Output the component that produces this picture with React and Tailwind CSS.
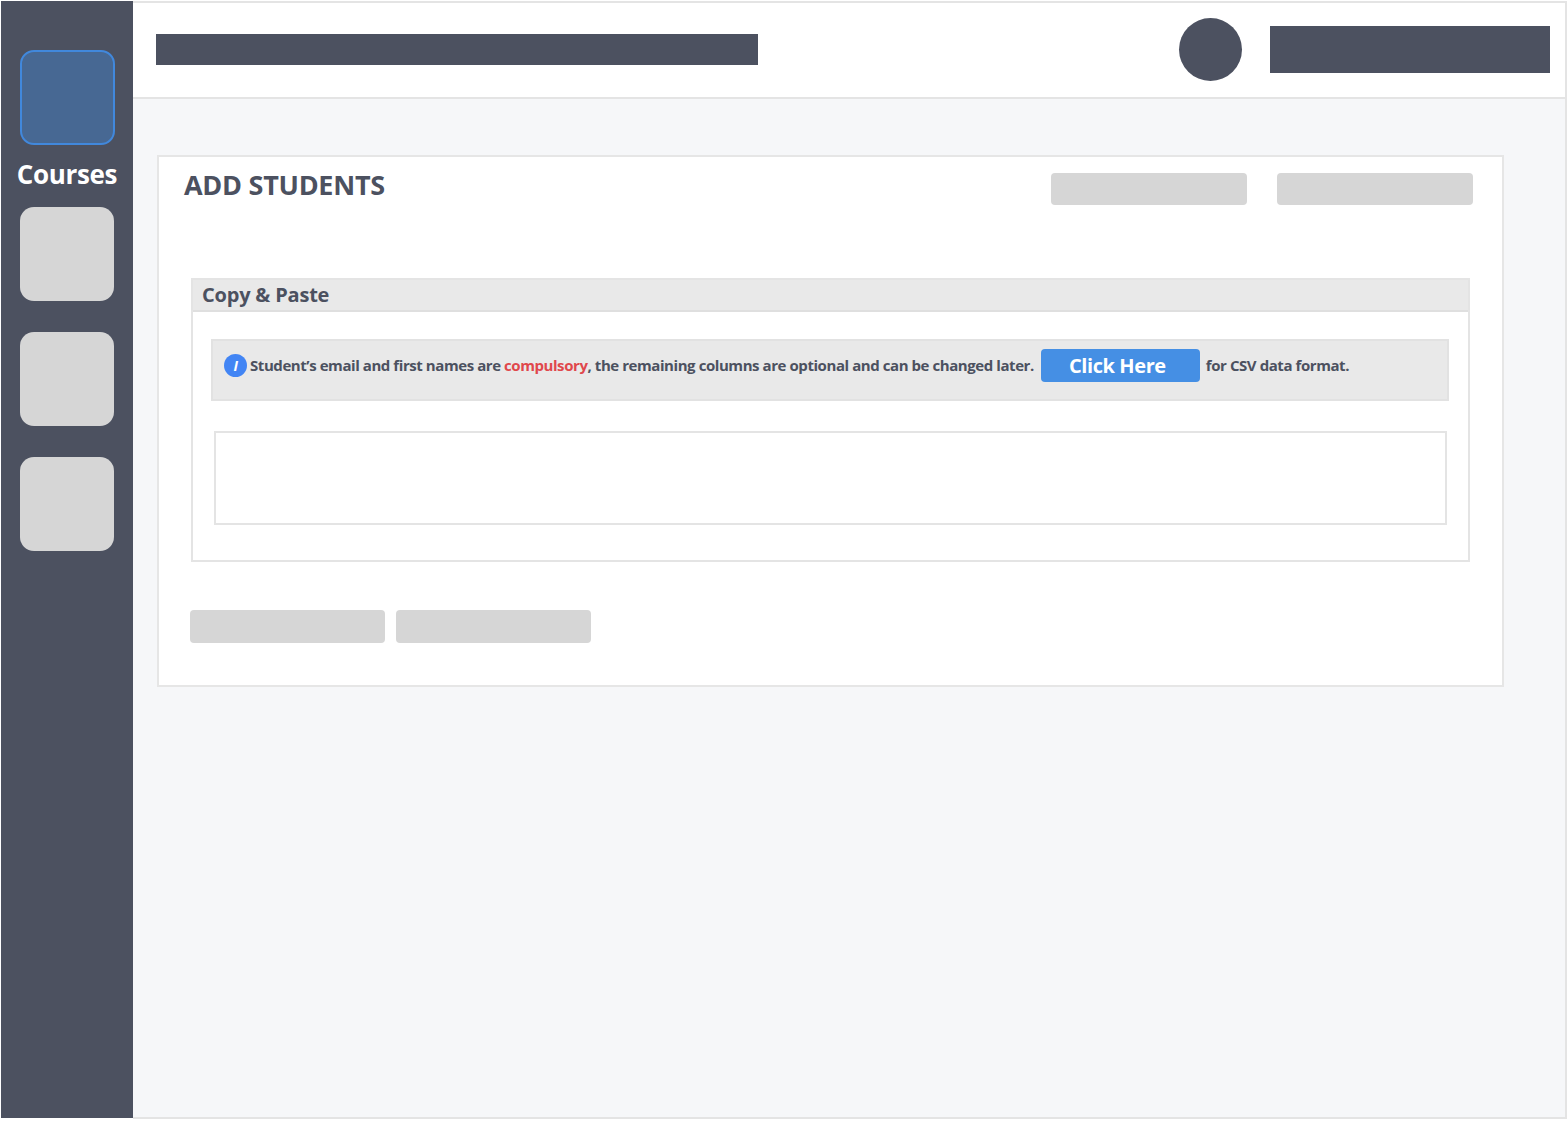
export default function App() {
  const font = { fontFamily: '"Open Sans", sans-serif' };

  return (
    <div className="w-[1568px] h-[1122px] bg-white pt-px pl-px pr-[1px] pb-[3px] overflow-hidden" style={font}>
      <div className="flex h-full">
        {/* Sidebar */}
        <div className="w-[132px] shrink-0 bg-[#4c5160] h-[1117px] flex flex-col items-center pt-[49px]">
          <div className="w-[95px] h-[95px] rounded-[14px] bg-[#476893] border-2 border-[#4188dc]"></div>
          <div className="mt-[12px] mb-[1px] h-[34px] text-white text-[26px] leading-[34px] font-bold tracking-[-0.35px]">Courses</div>
          <div className="mt-[15px] w-[94px] h-[94px] rounded-[14px] bg-[#d6d6d6]"></div>
          <div className="mt-[31px] w-[94px] h-[94px] rounded-[14px] bg-[#d6d6d6]"></div>
          <div className="mt-[31px] w-[94px] h-[94px] rounded-[14px] bg-[#d6d6d6]"></div>
        </div>

        <div className="flex-1 flex flex-col border-r-2 border-b-2 border-[#e4e4e4] bg-[#f6f7f9]">
          {/* Header */}
          <div className="h-[98px] shrink-0 bg-white border-t-2 border-b-2 border-[#e4e4e4] flex items-center pl-[23px] pr-[15px] pb-[2px]">
            <div className="w-[602px] h-[31px] bg-[#4c5160]"></div>
            <div className="ml-auto w-[63px] h-[63px] rounded-full bg-[#4c5160]"></div>
            <div className="ml-[28px] w-[280px] h-[47px] bg-[#4c5160]"></div>
          </div>

          {/* Panel */}
          <div className="ml-[24px] mt-[56px] w-[1347px] h-[532px] bg-white border-2 border-[#e6e6e6] pt-[15px] pl-[32px] pr-[25px]">
            <div className="flex items-start h-[106px]">
              <h1 className="w-[867px] shrink-0 -ml-[7px] text-[#4c5160] text-[27px] leading-[26px] font-bold tracking-[-0.27px] whitespace-nowrap">ADD STUDENTS</h1>
              <div className="w-[196px] shrink-0 h-[32px] mt-[1px] rounded-[4px] bg-[#d6d6d6]"></div>
              <div className="w-[196px] shrink-0 h-[32px] mt-[1px] ml-[30px] rounded-[4px] bg-[#d6d6d6]"></div>
            </div>

            <div className="w-[1279px] h-[284px] border-2 border-[#e4e4e4]">
              <div className="h-[32px] bg-[#e9e9e9] border-b-2 border-[#dfdfdf] pl-[9px] overflow-hidden">
                <div className="text-[#4c5160] text-[20px] leading-[32px] font-bold tracking-[-0.2px] -translate-y-[1px]">Copy &amp; Paste</div>
              </div>
              <div className="pt-[27px] pl-[18px] pr-[19px]">
                <div className="h-[62px] bg-[#e9e9e9] border-2 border-[#e2e2e2] flex items-center pl-[11px] pb-[9px] text-[#4c5160] text-[15px] font-bold tracking-[-0.43px]">
                  <span className="w-[23px] h-[23px] rounded-full bg-[#4285f4] text-white flex items-center justify-center text-[14px] font-bold italic shrink-0">I</span>
                  <span className="ml-[3px] whitespace-nowrap">
                    Student’s email and first names are <span className="text-[#e0474c]">compulsory</span>, the remaining columns are optional and can be changed later.
                  </span>
                  <span className="ml-[7px] w-[159px] h-[33px] rounded-[4px] bg-[#458fe4] text-white text-[20px] leading-[33px] font-bold text-center shrink-0 tracking-[-0.4px] pr-[6px]">Click Here</span>
                  <span className="ml-[6px] whitespace-nowrap">for CSV data format.</span>
                </div>
                <div className="mt-[30px] ml-[3px] w-[1233px] h-[94px] bg-white border-2 border-[#e4e4e4]"></div>
              </div>
            </div>

            <div className="flex gap-[11px] mt-[48px] -ml-[1px]">
              <div className="w-[195px] h-[33px] rounded-[4px] bg-[#d6d6d6]"></div>
              <div className="w-[195px] h-[33px] rounded-[4px] bg-[#d6d6d6]"></div>
            </div>
          </div>
        </div>
      </div>
    </div>
  );
}
